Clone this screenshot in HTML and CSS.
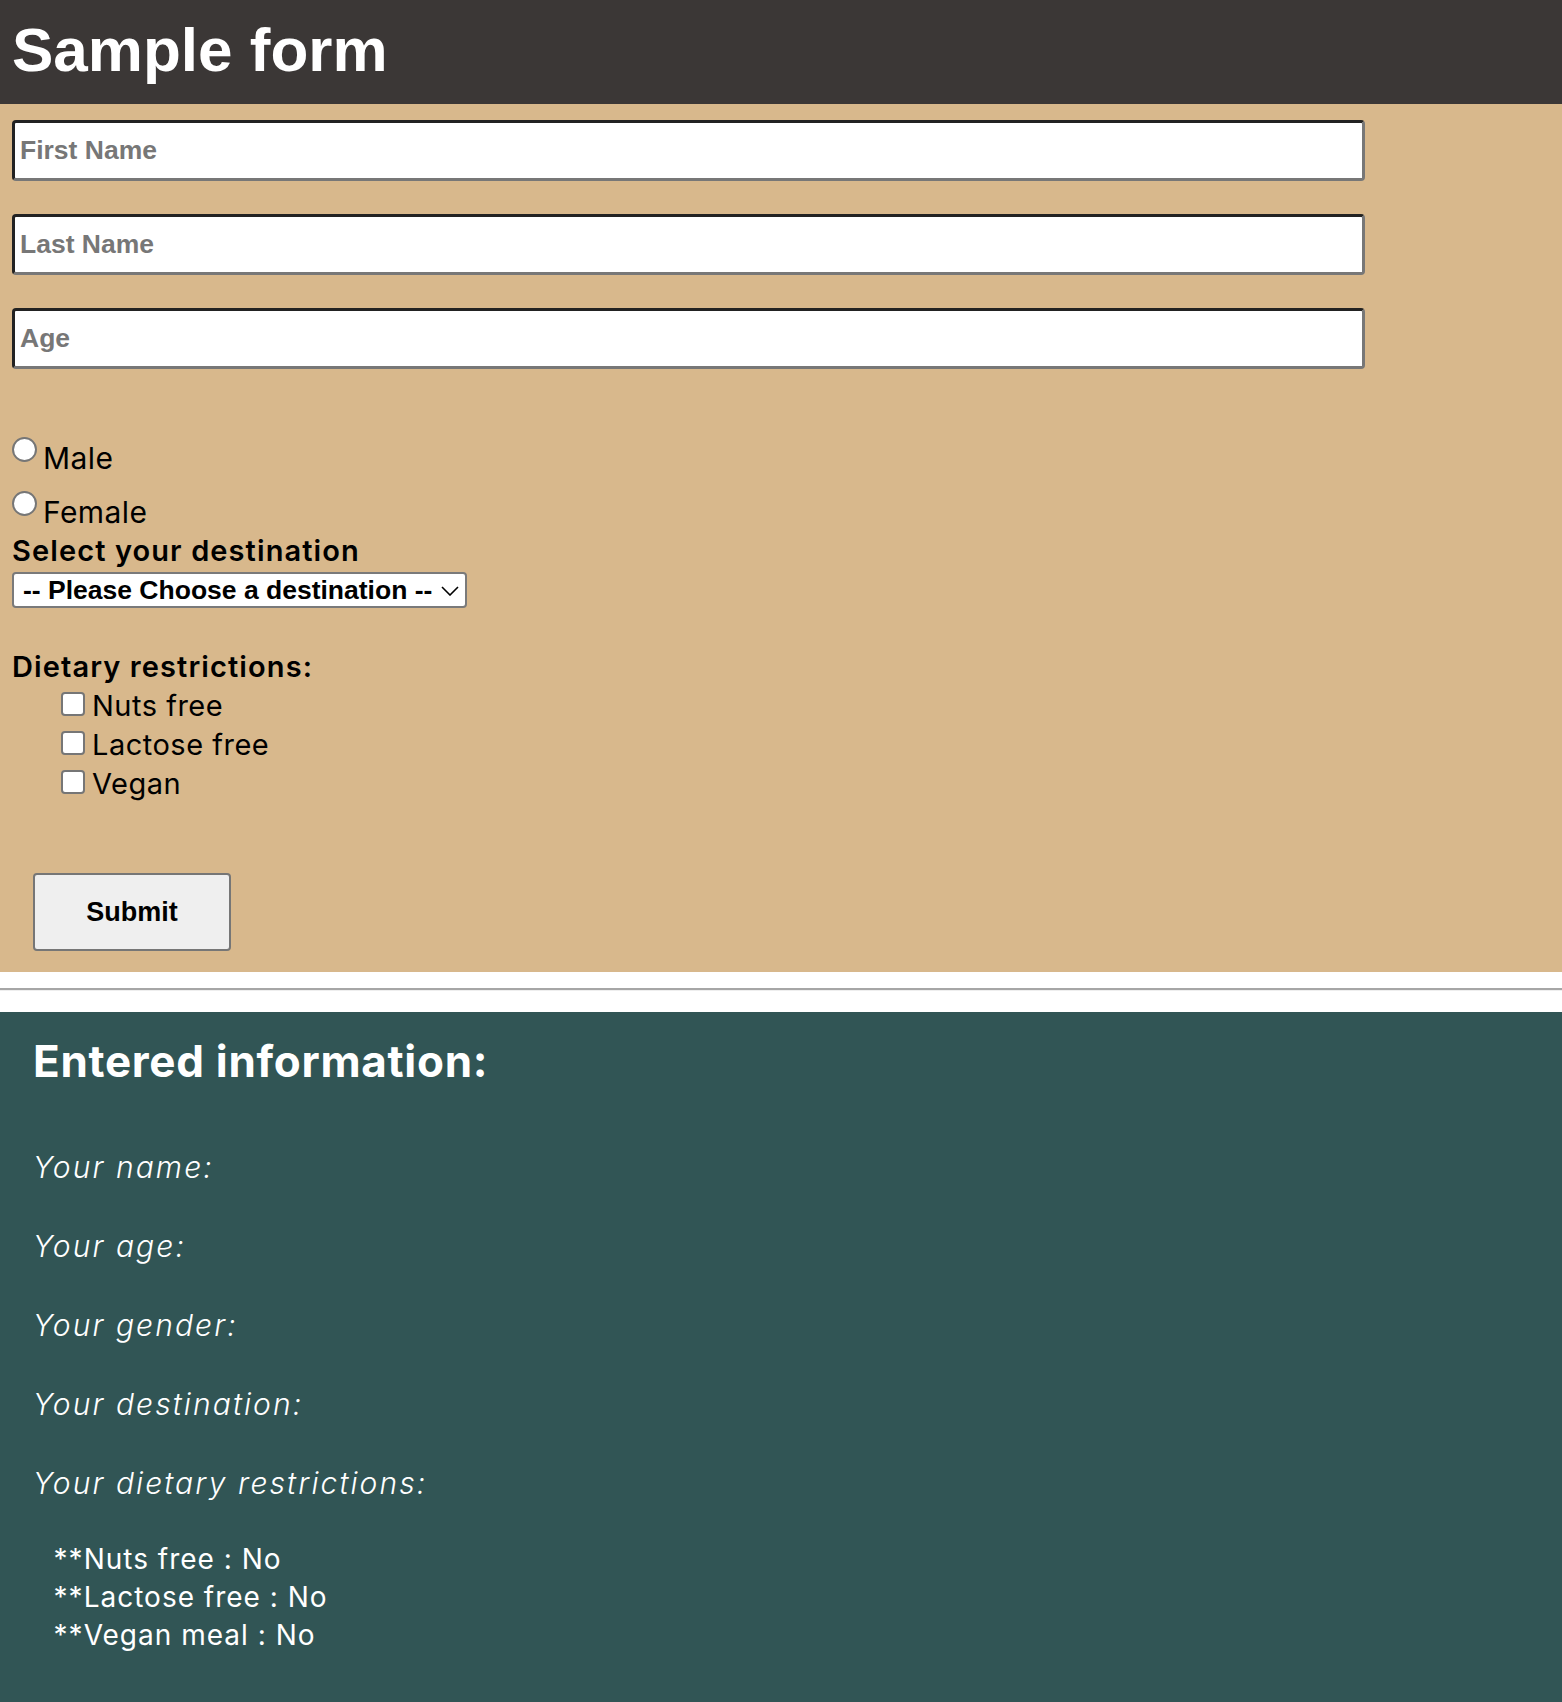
FILE: index.html
```html
<!DOCTYPE html>
<html lang="en">
<head>
<meta charset="utf-8">
<title>Sample form</title>
<link rel="stylesheet" href="styles.css">
</head>
<body>
<header class="header">
  <h1 class="title">Sample form</h1>
</header>
<form class="form">
  <input class="text-input" type="text" placeholder="First Name">
  <input class="text-input" type="text" placeholder="Last Name">
  <input class="text-input last" type="text" placeholder="Age">

  <div class="radio-group">
    <label class="radio-row"><input class="radio" type="radio" name="gender" value="male"><span class="opt-text">Male</span></label>
    <label class="radio-row"><input class="radio" type="radio" name="gender" value="female"><span class="opt-text">Female</span></label>
  </div>

  <div class="field-label">Select your destination</div>
  <div class="select-wrap">
    <select class="select">
      <option>-- Please Choose a destination --</option>
    </select>
    <svg class="chevron" width="18" height="10" viewBox="0 0 18 10" aria-hidden="true"><path d="M1 1 L9 9 L17 1" fill="none" stroke="#000" stroke-width="1.6"/></svg>
  </div>

  <div class="field-label diet-label">Dietary restrictions:</div>
  <div class="check-group">
    <label class="check-row"><input class="check" type="checkbox"><span class="opt-text">Nuts free</span></label>
    <label class="check-row"><input class="check" type="checkbox"><span class="opt-text">Lactose free</span></label>
    <label class="check-row"><input class="check" type="checkbox"><span class="opt-text">Vegan</span></label>
  </div>

  <button class="submit" type="button">Submit</button>
</form>
<hr class="divider">
<section class="info">
  <h2 class="info-title">Entered information:</h2>
  <p class="info-item">Your name:</p>
  <p class="info-item">Your age:</p>
  <p class="info-item">Your gender:</p>
  <p class="info-item">Your destination:</p>
  <p class="info-item last">Your dietary restrictions:</p>
  <div class="diet-list">
    <div class="diet-line">**Nuts free : No</div>
    <div class="diet-line">**Lactose free : No</div>
    <div class="diet-line">**Vegan meal : No</div>
  </div>
</section>
</body>
</html>
```
FILE: styles.css
```css
html, body {
  margin: 0;
  padding: 0;
  background: #ffffff;
}

body {
  font-family: Inter, "Noto Sans", sans-serif;
  color: #000;
}

.header {
  background: #3b3736;
  height: 104px;
  box-sizing: border-box;
  padding: 0 0 5px 12px;
}

.title {
  margin: 0;
  font-family: "Liberation Sans", Arial, sans-serif;
  font-weight: bold;
  font-size: 62px;
  line-height: 99px;
  color: #ffffff;
}

.form {
  background: #d8b88c;
  padding: 16px 0 21px 12px;
}

.text-input {
  display: block;
  box-sizing: border-box;
  width: 1353px;
  height: 61px;
  margin: 0 0 33px 0;
  padding: 0 5px;
  border-style: solid;
  border-width: 3px;
  border-color: #222222 #777777 #777777 #222222;
  border-radius: 4px;
  background: #ffffff;
  font-family: "Liberation Sans", Arial, sans-serif;
  font-weight: bold;
  font-size: 26.5px;
  color: #000;
  outline: none;
}

.text-input.last {
  margin-bottom: 0;
}

.text-input::placeholder {
  color: #777777;
  opacity: 1;
}

.radio-group {
  margin-top: 68px;
}

.radio-row {
  display: flex;
  align-items: flex-start;
  height: 39px;
  margin-bottom: 14.5px;
}

.radio-row + .radio-row {
  margin-bottom: 3.5px;
}

.radio {
  appearance: none;
  -webkit-appearance: none;
  box-sizing: border-box;
  width: 25px;
  height: 25px;
  margin: 0 6px 0 0;
  border: 2px solid #767676;
  border-radius: 50%;
  background: #ffffff;
  flex: none;
}

.radio-row .opt-text {
  margin-top: 3px;
  font-size: 30px;
  line-height: 36px;
  letter-spacing: 0.4px;
}

.field-label {
  font-weight: 600;
  font-size: 29px;
  line-height: 35px;
  letter-spacing: 1.1px;
}

.select-wrap {
  position: relative;
  width: 455px;
  margin-top: 4px;
}

.select {
  appearance: none;
  -webkit-appearance: none;
  display: block;
  box-sizing: border-box;
  width: 455px;
  height: 36px;
  padding: 0 0 0 9px;
  border: 2px solid #7a7a7a;
  border-radius: 4px;
  background: #ffffff;
  font-family: "Liberation Sans", Arial, sans-serif;
  font-weight: bold;
  font-size: 26.5px;
  color: #000;
}

.chevron {
  position: absolute;
  left: 429px;
  top: 14px;
  pointer-events: none;
}

.diet-label {
  margin-top: 41px;
}

.check-group {
  margin-top: 4px;
  padding-left: 49px;
}

.check-row {
  display: flex;
  align-items: flex-start;
  height: 39px;
}

.check {
  appearance: none;
  -webkit-appearance: none;
  box-sizing: border-box;
  width: 24px;
  height: 24px;
  margin: 4px 7px 0 0;
  border: 2px solid #767676;
  border-radius: 4px;
  background: #ffffff;
  flex: none;
}

.check-row .opt-text {
  font-size: 29px;
  line-height: 35px;
  letter-spacing: 0.5px;
}

.submit {
  display: block;
  box-sizing: border-box;
  width: 198px;
  height: 78px;
  margin: 68px 0 0 21px;
  border: 2px solid #767676;
  border-radius: 4px;
  background: #efefef;
  font-family: "Liberation Sans", Arial, sans-serif;
  font-weight: bold;
  font-size: 27px;
  color: #000;
  padding: 0;
}

.divider {
  margin: 16px 0 21px 0;
  border: none;
  border-top: 2px solid #a6a6a6;
  border-bottom: 1px solid #eeeeee;
  height: 0;
}

.info {
  background: #315555;
  color: #ffffff;
  padding: 22.5px 0 48px 33px;
}

.info-title {
  margin: 0 0 61.5px 0;
  font-weight: bold;
  font-size: 44px;
  line-height: 53px;
  letter-spacing: 0.7px;
}

.info-item {
  margin: 0 0 43px 0;
  font-style: italic;
  font-weight: 300;
  font-size: 30px;
  line-height: 36px;
  letter-spacing: 2.1px;
}

.info-item.last {
  margin-bottom: 38.7px;
}

.diet-list {
  padding-left: 20.6px;
}

.diet-line {
  font-size: 28px;
  line-height: 38.3px;
  letter-spacing: 1px;
}
```
